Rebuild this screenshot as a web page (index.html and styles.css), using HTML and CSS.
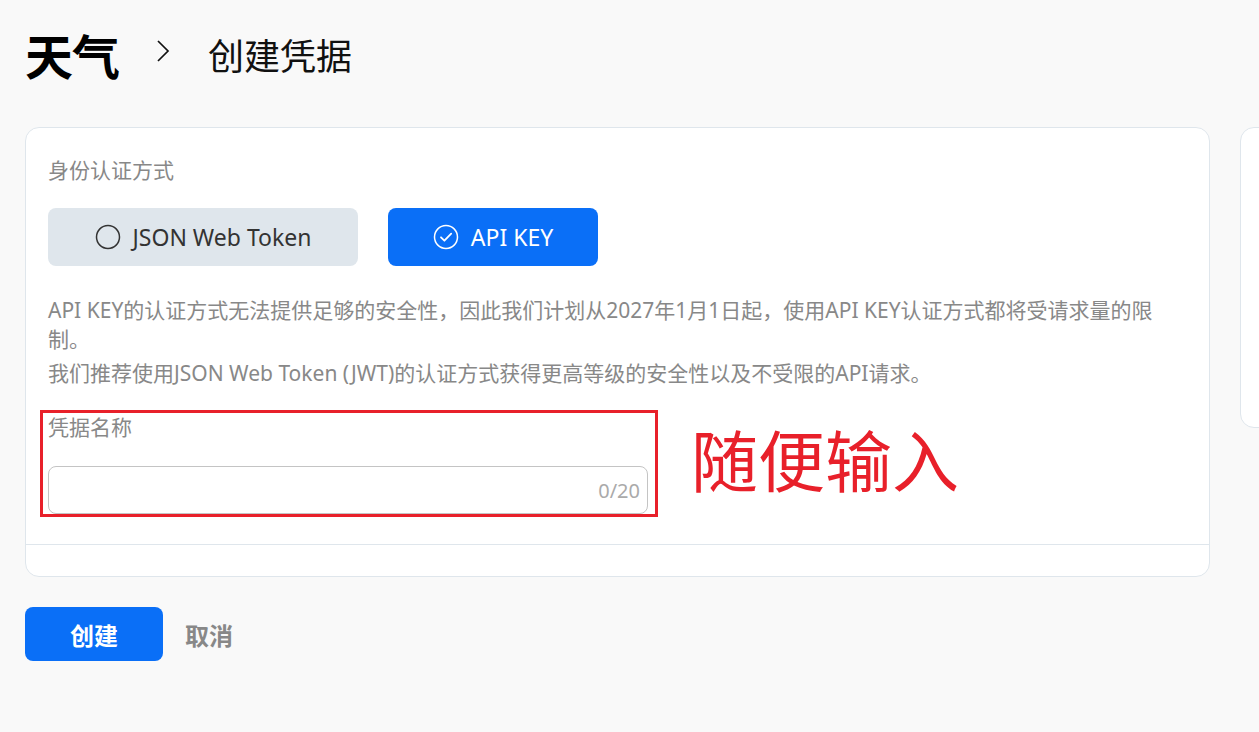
FILE: index.html
```html
<!DOCTYPE html>
<html lang="zh-CN">

<head>
    <meta charset="UTF-8">
    <title>创建凭据</title>
    <link rel="stylesheet" href="styles.css">
</head>

<body>
    <div class="header">
        <span class="project">天气</span>
        <svg class="sep" width="14" height="24" viewBox="0 0 14 24"><path d="M2 2l10 10L2 22" fill="none" stroke="#111" stroke-width="1.7"/></svg>
        <span class="page-title">创建凭据</span>
    </div>

    <div class="cards">
        <div class="card">
            <div class="card-body">
                <div class="label">身份认证方式</div>
                <div class="auth-options">
                    <button class="opt">
                        <svg width="26" height="26" viewBox="0 0 26 26"><circle cx="13" cy="13" r="11.5" fill="none" stroke="#333" stroke-width="1.5"/></svg>
                        JSON Web Token
                    </button>
                    <button class="opt opt-active">
                        <svg width="26" height="26" viewBox="0 0 26 26"><circle cx="13" cy="13" r="11.5" fill="none" stroke="#fff" stroke-width="1.5"/><path d="M8 13.3l3.4 3.4L18.2 9.6" fill="none" stroke="#fff" stroke-width="1.8" stroke-linecap="round" stroke-linejoin="round"/></svg>
                        API KEY
                    </button>
                </div>
                <div class="note">API KEY的认证方式无法提供足够的安全性，因此我们计划从2027年1月1日起，使用API KEY认证方式都将受请求量的限制。</div>
                <div class="note note-next">我们推荐使用JSON Web Token (JWT)的认证方式获得更高等级的安全性以及不受限的API请求。</div>

                <div class="name-row">
                    <div class="field">
                        <div class="label">凭据名称</div>
                        <div class="input">
                            <span class="count">0/20</span>
                        </div>
                    </div>
                    <div class="hint">随便输入</div>
                </div>
            </div>
            <div class="card-foot"></div>
        </div>
        <div class="card-side"></div>
    </div>

    <div class="actions">
        <button class="btn-create">创建</button>
        <span class="btn-cancel">取消</span>
    </div>
</body>

</html>
```

FILE: styles.css
```css
body {
    margin: 0;
    padding: 0 0 0 25px;
    background-color: #f9f9f9;
    color: #222;
    font-family: "Noto Sans", "Noto Sans CJK SC", sans-serif;
    overflow: hidden;
}

.header {
    display: flex;
    align-items: center;
    height: 108px;
}

.project {
    font-size: 48px;
    font-weight: 700;
    color: #000;
    letter-spacing: -1px;
}

.sep {
    margin: 0 38px 0 37px;
    position: relative;
    top: -3px;
}

.page-title {
    font-size: 36px;
    color: #111;
}

.cards {
    display: flex;
    gap: 30px;
    margin-top: 19px;
    align-items: flex-start;
    width: 1234px;
    overflow: hidden;
}

.card {
    width: 1183px;
    flex-shrink: 0;
    background: white;
    border: 1px solid #dfe6ec;
    border-radius: 14px;
}

.card-side {
    flex-shrink: 0;
    width: 100px;
    height: 299px;
    background: white;
    border: 1px solid #dfe6ec;
    border-radius: 14px;
}

.card-body {
    padding: 28px 22px 27px 22px;
    border-bottom: 1px solid #dfe6ec;
}

.card-foot {
    height: 31px;
}

.label {
    font-size: 21px;
    line-height: 28px;
    color: #888;
}

.auth-options {
    display: flex;
    gap: 30px;
    margin-top: 24px;
}

.opt {
    display: flex;
    align-items: center;
    justify-content: center;
    gap: 12px;
    width: 310px;
    height: 58px;
    border: none;
    border-radius: 8px;
    background-color: #dfe6ec;
    color: #333;
    font-family: inherit;
    font-size: 23px;
    cursor: pointer;
}

.opt-active {
    width: 210px;
    background-color: #0a6ff7;
    color: white;
}

.note {
    max-width: 1125px;
    margin-top: 30px;
    font-size: 21px;
    line-height: 29px;
    color: #888;
}

.note-next {
    margin-top: 5px;
}

.name-row {
    display: flex;
    align-items: flex-start;
    margin-top: 22px;
}

.field {
    width: 600px;
    margin-left: -8px;
    padding: 0 7px 0 5px;
    border: 3px solid #e8202a;
}

.input {
    display: flex;
    align-items: center;
    justify-content: flex-end;
    height: 46px;
    margin-top: 25px;
    border: 1px solid #c4c4c4;
    border-radius: 8px;
    padding: 0 7px;
}

.count {
    font-size: 20px;
    color: #aaa;
}

.hint {
    margin-left: 33px;
    margin-top: 11px;
    font-size: 67px;
    line-height: 80px;
    color: #e8202a;
}

.actions {
    display: flex;
    align-items: center;
    gap: 22px;
    margin-top: 30px;
}

.btn-create {
    width: 138px;
    height: 54px;
    border: none;
    border-radius: 8px;
    background-color: #0a6ff7;
    color: white;
    font-family: inherit;
    font-size: 24px;
    font-weight: 700;
    cursor: pointer;
}

.btn-cancel {
    font-size: 24px;
    font-weight: 700;
    color: #888;
}
```
